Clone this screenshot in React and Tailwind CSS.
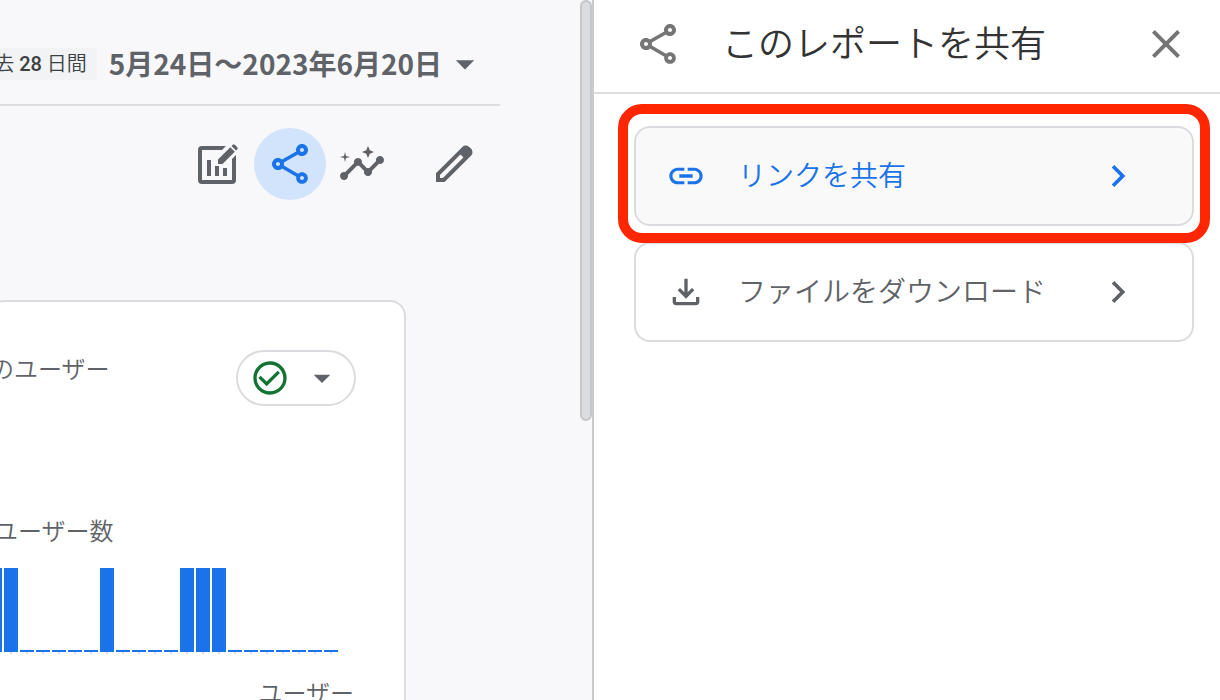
import React from "react";
import {
  MdArrowDropDown,
  MdCheckCircleOutline,
  MdChevronRight,
  MdClose,
  MdInsights,
  MdLink,
  MdOutlineFileDownload,
  MdOutlineShare,
} from "react-icons/md";

const BARS = [1, 1, 0, 0, 0, 0, 0, 1, 0, 0, 0, 0, 1, 1, 1, 0, 0, 0, 0, 0, 0, 0];

function EditChartIcon() {
  return (
    <svg width="48" height="48" viewBox="0 0 48 48" fill="currentColor" aria-hidden="true">
      <path d="M8 6h24l-4 4H8v30h30V19l4-4v25a4 4 0 0 1-4 4H8a4 4 0 0 1-4-4V10a4 4 0 0 1 4-4z" />
      <path d="M13 20h4v16h-4zM21 26h4v10h-4zM29 28h4v8h-4z" />
      <path d="M24 24v-4.500L36.300 7.200l4.500 4.500L28.500 24zM37.500 6l1.300-1.300a1.500 1.500 0 0 1 2 0l2.500 2.500a1.500 1.500 0 0 1 0 2L42 10.500z" />
    </svg>
  );
}

function PencilIcon() {
  return (
    <svg width="48" height="48" viewBox="0 0 48 48" aria-hidden="true">
      <path
        d="M8 40v-5.800L34 8.200a2.500 2.500 0 0 1 3.500 0l2.300 2.300a2.500 2.500 0 0 1 0 3.500L13.800 40z"
        fill="none"
        stroke="currentColor"
        strokeWidth="4"
      />
      <path d="M29 13l6-6h4l2.500 2.500v4L35 19z" fill="currentColor" />
    </svg>
  );
}

function UsersChart() {
  return (
    <svg width="350" height="86" viewBox="0 0 350 86" role="img" aria-label="ユーザー数" className="shrink-0">
      {BARS.map((v, i) => (
        <g key={i}>
          <rect x={i * 16} y={v ? 0 : 82} width="14" height={v ? 84 : 2} fill="#1a73e8" />
          <rect x={i * 16 + 6} y="84" width="2" height="2" fill="#dadce0" />
        </g>
      ))}
    </svg>
  );
}

function ToolButton({ label, active, children }) {
  return (
    <button
      type="button"
      aria-label={label}
      className={
        "flex size-[72px] items-center justify-center rounded-full " +
        (active ? "bg-[#d2e3fc] text-[#1a73e8]" : "text-[#5f6368]")
      }
    >
      {children}
    </button>
  );
}

function ShareOption({ icon: Icon, label, selected }) {
  return (
    <button
      type="button"
      className={
        "flex h-[100px] w-full items-center gap-8 rounded-2xl border-2 border-[#dadce0] pr-[52px] pl-[30px] text-left " +
        (selected ? "bg-[#f9f9f9] text-[#1a73e8]" : "bg-white text-[#5f6368]")
      }
    >
      <Icon size={40} className="shrink-0" />
      <span className="flex-1 pb-1 text-[28px] leading-8 font-[350] whitespace-nowrap">{label}</span>
      <MdChevronRight size={44} className="shrink-0" />
    </button>
  );
}

export default function App() {
  return (
    <div className="flex h-screen overflow-hidden bg-[#f8f8fb] font-['Noto_Sans_CJK_JP',sans-serif] text-[#5f6368]">
      <main className="flex min-w-0 flex-1 flex-col overflow-hidden">
        <div className="mr-20 flex h-[106px] shrink-0 items-center justify-end border-b-2 border-[#dadce0] pt-6 pr-[13px]">
          <span className="mr-3 flex h-8 shrink-0 items-center bg-[#f1f3f4] pr-2.5 font-['Roboto','Noto_Sans_CJK_JP',sans-serif] text-xl font-[350] whitespace-pre text-[#3c4043]">
            去 <span className="font-medium">28</span> 日間
          </span>
          <button type="button" className="flex shrink-0 items-center text-[28px] leading-8 font-bold whitespace-nowrap">
            <span className="pr-px pb-0.5">5月24日〜2023年6月20日</span>
            <MdArrowDropDown size={44} />
          </button>
        </div>

        <div className="mt-[22px] mr-[90px] flex shrink-0 justify-end">
          <ToolButton label="比較を編集"><EditChartIcon /></ToolButton>
          <ToolButton label="このレポートを共有" active><MdOutlineShare size={48} /></ToolButton>
          <ToolButton label="インサイト"><MdInsights size={48} /></ToolButton>
          <div className="ml-5">
            <ToolButton label="レポートをカスタマイズ"><PencilIcon /></ToolButton>
          </div>
        </div>

        <section className="mt-[100px] mr-[174px] -ml-3 flex shrink-0 flex-col rounded-2xl border-2 border-[#dadce0] bg-white pt-12 pr-12 pb-10 text-2xl leading-9 font-[350]">
          <div className="flex items-start justify-between">
            <h2>のユーザー</h2>
            <button type="button" aria-label="データの状態" className="flex h-14 items-center gap-3 rounded-full border-2 border-[#dadce0] px-3">
              <MdCheckCircleOutline size={40} className="text-[#137333]" />
              <MdArrowDropDown size={40} />
            </button>
          </div>
          <h3 className="mt-[106px] pl-1">ユーザー数</h3>
          <div className="mt-5 mr-[18px] flex justify-end">
            <UsersChart />
          </div>
          <p className="mt-5 pr-0.5 text-right">ユーザー</p>
        </section>
      </main>

      <div className="h-[421px] w-3 shrink-0 rounded-full border-2 border-[#c4c6c9] bg-[#dadce0]" />

      <aside className="w-[628px] shrink-0 border-l-2 border-[#cccccc] bg-white">
        <header className="flex h-[94px] items-center border-b-2 border-[#dedede] pr-[30px] pb-1 pl-10 text-[#757575]">
          <MdOutlineShare size={48} className="shrink-0" />
          <h1 className="ml-10 flex-1 pb-1.5 text-4xl leading-10 font-[350] whitespace-nowrap text-[#333333]">このレポートを共有</h1>
          <button type="button" aria-label="閉じる">
            <MdClose size={48} />
          </button>
        </header>
        <div className="flex flex-col gap-4 pt-8 pr-[26px] pl-10">
          <div className="relative">
            <ShareOption icon={MdLink} label="リンクを共有" selected />
            <div className="pointer-events-none absolute -inset-x-4 -top-[22px] -bottom-[17px] z-10 rounded-3xl border-10 border-[#ff2600]" />
          </div>
          <ShareOption icon={MdOutlineFileDownload} label="ファイルをダウンロード" />
        </div>
      </aside>
    </div>
  );
}
